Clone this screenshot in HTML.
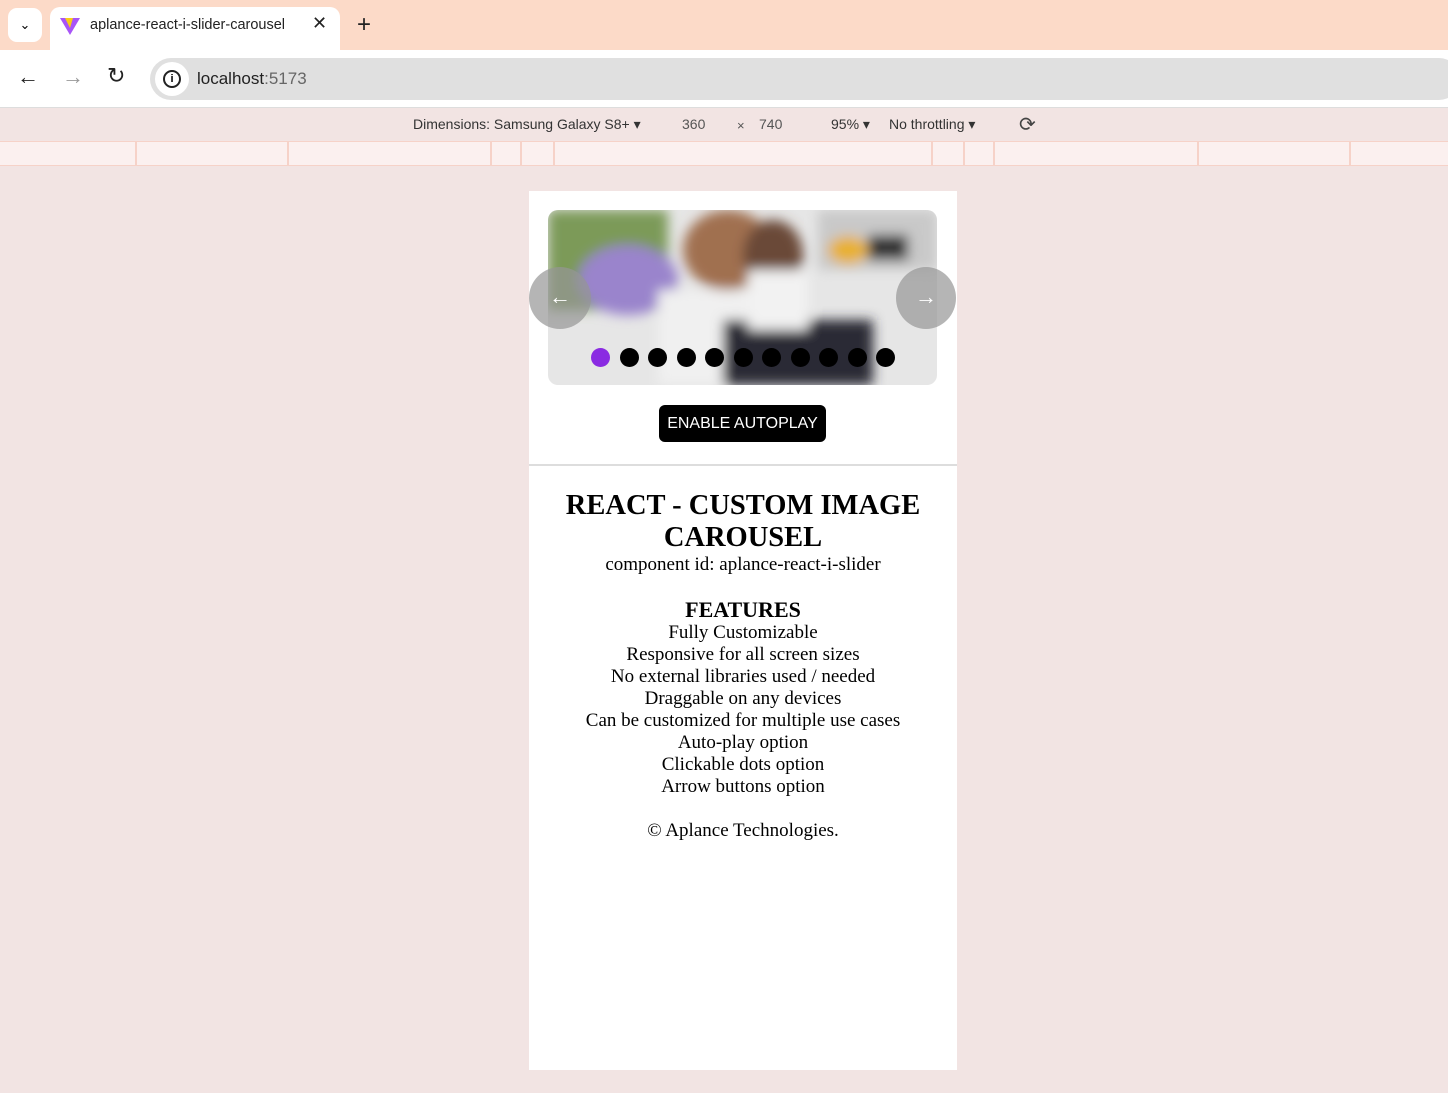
<!DOCTYPE html>
<html><head><meta charset="utf-8"><style>
*{margin:0;padding:0;box-sizing:border-box}
body{width:1448px;height:1093px;background:#f2e4e3;font-family:"Liberation Sans",sans-serif;position:relative;overflow:hidden}
.abs{position:absolute}
</style></head><body>
<div class="abs" style="left:0;top:0;width:1448px;height:50px;background:#fcdac8"></div>
<div class="abs" style="left:8px;top:8px;width:34px;height:34px;background:#fff;border-radius:9px;text-align:center;line-height:34px;font-size:13px">⌄</div>
<div class="abs" style="left:50px;top:7px;width:290px;height:45px;background:#fff;border-radius:10px 10px 0 0"></div>
<svg class="abs" style="left:59px;top:16px" width="22" height="20"><path d="M1 2 L21 2 L11 19 Z" fill="#a855f7"/><path d="M6 2 L14 2 L11 12 Z" fill="#facc15"/></svg>
<div class="abs" style="left:90px;top:17px;font-size:14.5px;color:#222">aplance-react-i-slider-carousel</div>
<div class="abs" style="left:312px;top:13px;font-size:18px;color:#222">✕</div>
<div class="abs" style="left:357px;top:11px;font-size:24px;color:#222">+</div>
<div class="abs" style="left:0;top:50px;width:1448px;height:58px;background:#fff;border-bottom:1px solid #ddd"></div>
<div class="abs" style="left:17px;top:64px;font-size:22px;color:#222">←</div>
<div class="abs" style="left:62px;top:64px;font-size:22px;color:#999">→</div>
<div class="abs" style="left:107px;top:63px;font-size:22px;color:#222">↻</div>
<div class="abs" style="left:150px;top:58px;width:1310px;height:42px;background:#e0e0e0;border-radius:21px"></div>
<div class="abs" style="left:155px;top:62px;width:34px;height:34px;background:#fff;border-radius:50%"></div>
<div class="abs" style="left:163px;top:70px;width:18px;height:18px;border:2px solid #222;border-radius:50%;text-align:center;font-size:11px;font-weight:bold;line-height:14px">i</div>
<div class="abs" style="left:197px;top:69px;font-size:17px;color:#222">localhost<span style="color:#666">:5173</span></div>
<div class="abs" style="left:0;top:109px;width:1448px;height:32px;background:#f2e4e3"></div>
<div class="abs" style="left:413px;top:116px;font-size:14px;color:#333">Dimensions: Samsung Galaxy S8+ ▾</div>
<div class="abs" style="left:682px;top:116px;font-size:14px;color:#555">360</div>
<div class="abs" style="left:737px;top:118px;font-size:13px;color:#555">×</div>
<div class="abs" style="left:759px;top:116px;font-size:14px;color:#555">740</div>
<div class="abs" style="left:831px;top:116px;font-size:14px;color:#333">95% ▾</div>
<div class="abs" style="left:889px;top:116px;font-size:14px;color:#333">No throttling ▾</div>
<div class="abs" style="left:1019px;top:112px;font-size:20px;color:#444">⟳</div>
<div class="abs" style="left:0;top:141px;width:1448px;height:25px;background:#fbf0ef;border-top:1px solid #f6d2c8;border-bottom:1px solid #f6d2c8"></div>
<div class="abs" style="left:135px;top:142px;width:2px;height:23px;background:#f6d2c8"></div>
<div class="abs" style="left:287px;top:142px;width:2px;height:23px;background:#f6d2c8"></div>
<div class="abs" style="left:490px;top:142px;width:2px;height:23px;background:#f6d2c8"></div>
<div class="abs" style="left:520px;top:142px;width:2px;height:23px;background:#f6d2c8"></div>
<div class="abs" style="left:553px;top:142px;width:2px;height:23px;background:#f6d2c8"></div>
<div class="abs" style="left:931px;top:142px;width:2px;height:23px;background:#f6d2c8"></div>
<div class="abs" style="left:963px;top:142px;width:2px;height:23px;background:#f6d2c8"></div>
<div class="abs" style="left:993px;top:142px;width:2px;height:23px;background:#f6d2c8"></div>
<div class="abs" style="left:1197px;top:142px;width:2px;height:23px;background:#f6d2c8"></div>
<div class="abs" style="left:1349px;top:142px;width:2px;height:23px;background:#f6d2c8"></div>

<div class="abs" style="left:529px;top:191px;width:428px;height:879px;background:#fff"></div>
<svg class="abs" style="left:548px;top:210px" width="389" height="175">
<defs><clipPath id="c"><rect width="389" height="175" rx="10"/></clipPath><filter id="b"><feGaussianBlur stdDeviation="6"/></filter></defs>
<g clip-path="url(#c)">
<rect width="389" height="175" fill="#e6e6e6"/>
<g filter="url(#b)">
<rect x="0" y="0" width="120" height="100" fill="#7c9a58"/>
<ellipse cx="80" cy="70" rx="50" ry="35" fill="#9a84cc"/>
<rect x="270" y="0" width="119" height="60" fill="#c9c9c9"/>
<ellipse cx="300" cy="40" rx="20" ry="14" fill="#e8b030"/>
<rect x="320" y="25" width="40" height="25" fill="#333"/>
<ellipse cx="180" cy="40" rx="45" ry="40" fill="#a07050"/>
<ellipse cx="225" cy="45" rx="30" ry="35" fill="#6a4a38"/>
<rect x="110" y="80" width="110" height="95" fill="#f0f0f0"/>
<rect x="175" y="110" width="150" height="65" fill="#2a2a35"/>
<rect x="200" y="60" width="60" height="60" fill="#f2f2f2"/>
</g>
</g></svg>
<div class="abs" style="left:529px;top:267px;width:62px;height:62px;border-radius:50%;background:rgba(150,150,150,.7);color:#fff;font-size:22px;text-align:center;line-height:60px">←</div>
<div class="abs" style="left:896px;top:267px;width:60px;height:62px;border-radius:50%;background:rgba(150,150,150,.7);color:#fff;font-size:22px;text-align:center;line-height:60px">→</div>
<div class="abs" style="left:591px;top:348px;display:flex;gap:9.5px">
<span style="width:19px;height:19px;border-radius:50%;background:#8a2be2"></span>
<span style="width:19px;height:19px;border-radius:50%;background:#000"></span><span style="width:19px;height:19px;border-radius:50%;background:#000"></span><span style="width:19px;height:19px;border-radius:50%;background:#000"></span><span style="width:19px;height:19px;border-radius:50%;background:#000"></span><span style="width:19px;height:19px;border-radius:50%;background:#000"></span><span style="width:19px;height:19px;border-radius:50%;background:#000"></span><span style="width:19px;height:19px;border-radius:50%;background:#000"></span><span style="width:19px;height:19px;border-radius:50%;background:#000"></span><span style="width:19px;height:19px;border-radius:50%;background:#000"></span><span style="width:19px;height:19px;border-radius:50%;background:#000"></span>
</div>
<div class="abs" style="left:659px;top:405px;width:167px;height:37px;background:#000;border-radius:6px;color:#fff;font-size:16px;text-align:center;line-height:37px">ENABLE AUTOPLAY</div>
<div class="abs" style="left:529px;top:464px;width:428px;height:2px;background:#ddd"></div>
<div class="abs" style="left:529px;top:490px;width:428px;text-align:center;font-family:'Liberation Serif',serif;color:#000">
<div style="font-size:28.5px;font-weight:bold;line-height:32px">REACT - CUSTOM IMAGE<br>CAROUSEL</div>
<div style="font-size:19px;line-height:22px">component id: aplance-react-i-slider</div>
<div style="height:22px"></div>
<div style="font-size:22px;font-weight:bold;line-height:24px">FEATURES</div>
<div style="font-size:19px;line-height:22px">Fully Customizable<br>Responsive for all screen sizes<br>No external libraries used / needed<br>Draggable on any devices<br>Can be customized for multiple use cases<br>Auto-play option<br>Clickable dots option<br>Arrow buttons option</div>
<div style="height:22px"></div>
<div style="font-size:19px;line-height:22px">© Aplance Technologies.</div>
</div>
</body></html>
